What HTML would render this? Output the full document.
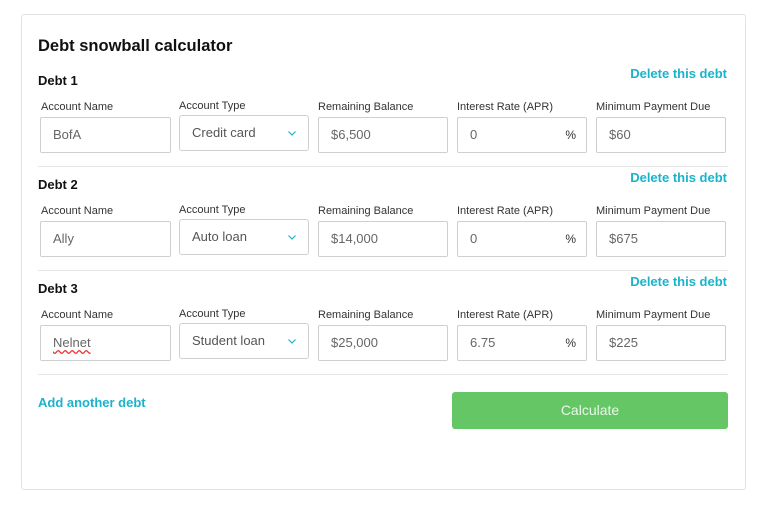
<!DOCTYPE html>
<html><head><meta charset="utf-8"><style>
*{box-sizing:border-box;margin:0;padding:0}
body{width:768px;height:509px;background:#fff;font-family:"Liberation Sans",sans-serif;position:relative;overflow:hidden}
.card{position:absolute;left:21px;top:14px;width:725px;height:476px;border:1px solid #e2e2e2;border-radius:3px}
.a{position:absolute}
h1{position:absolute;left:38px;top:37px;font-size:16.5px;font-weight:bold;color:#111}
.t{font-size:13px;font-weight:bold;color:#111}
.del{font-size:13px;font-weight:bold;color:#1ab3cc;right:41px}
.lbl{font-size:11px;color:#333}
.in{position:absolute;height:36px;border:1px solid #cfcfcf;border-radius:2px;font-size:13px;color:#666;padding-left:12px;line-height:34px}
.sel{height:36px;border-radius:3px;color:#555}
.pct{position:absolute;right:10px;top:0;color:#333;font-size:12px}
.chev{position:absolute;right:12px;top:13px;width:8px;height:8px}
.hr{position:absolute;left:38px;width:690px;height:1px;background:#e6e6e6}
</style></head><body>
<div class="card"></div>
<h1>Debt snowball calculator</h1>

<div class="a t" style="left:38px;top:73px">Debt 1</div>
<div class="a del" style="top:66px">Delete this debt</div>
<div class="a lbl" style="left:41px;top:101px">Account Name</div>
<div class="a lbl" style="left:179px;top:100px">Account Type</div>
<div class="a lbl" style="left:318px;top:101px">Remaining Balance</div>
<div class="a lbl" style="left:457px;top:101px">Interest Rate (APR)</div>
<div class="a lbl" style="left:596px;top:101px">Minimum Payment Due</div>
<div class="in" style="left:40px;top:117px;width:131px">BofA</div>
<div class="in sel" style="left:179px;top:115px;width:130px">Credit card<svg class="chev" viewBox="0 0 8 8"><path d="M0.5 2.5L4 6L7.5 2.5" fill="none" stroke="#1ab3cc" stroke-width="1.2"/></svg></div>
<div class="in" style="left:318px;top:117px;width:130px">$6,500</div>
<div class="in" style="left:457px;top:117px;width:130px">0<span class="pct">%</span></div>
<div class="in" style="left:596px;top:117px;width:130px">$60</div>
<div class="hr" style="top:166px"></div>

<div class="a t" style="left:38px;top:177px">Debt 2</div>
<div class="a del" style="top:170px">Delete this debt</div>
<div class="a lbl" style="left:41px;top:205px">Account Name</div>
<div class="a lbl" style="left:179px;top:204px">Account Type</div>
<div class="a lbl" style="left:318px;top:205px">Remaining Balance</div>
<div class="a lbl" style="left:457px;top:205px">Interest Rate (APR)</div>
<div class="a lbl" style="left:596px;top:205px">Minimum Payment Due</div>
<div class="in" style="left:40px;top:221px;width:131px">Ally</div>
<div class="in sel" style="left:179px;top:219px;width:130px">Auto loan<svg class="chev" viewBox="0 0 8 8"><path d="M0.5 2.5L4 6L7.5 2.5" fill="none" stroke="#1ab3cc" stroke-width="1.2"/></svg></div>
<div class="in" style="left:318px;top:221px;width:130px">$14,000</div>
<div class="in" style="left:457px;top:221px;width:130px">0<span class="pct">%</span></div>
<div class="in" style="left:596px;top:221px;width:130px">$675</div>
<div class="hr" style="top:270px"></div>

<div class="a t" style="left:38px;top:281px">Debt 3</div>
<div class="a del" style="top:274px">Delete this debt</div>
<div class="a lbl" style="left:41px;top:309px">Account Name</div>
<div class="a lbl" style="left:179px;top:308px">Account Type</div>
<div class="a lbl" style="left:318px;top:309px">Remaining Balance</div>
<div class="a lbl" style="left:457px;top:309px">Interest Rate (APR)</div>
<div class="a lbl" style="left:596px;top:309px">Minimum Payment Due</div>
<div class="in" style="left:40px;top:325px;width:131px"><span style="text-decoration:underline wavy #e33;text-underline-offset:2px">Nelnet</span></div>
<div class="in sel" style="left:179px;top:323px;width:130px">Student loan<svg class="chev" viewBox="0 0 8 8"><path d="M0.5 2.5L4 6L7.5 2.5" fill="none" stroke="#1ab3cc" stroke-width="1.2"/></svg></div>
<div class="in" style="left:318px;top:325px;width:130px">$25,000</div>
<div class="in" style="left:457px;top:325px;width:130px">6.75<span class="pct">%</span></div>
<div class="in" style="left:596px;top:325px;width:130px">$225</div>
<div class="hr" style="top:374px"></div>

<div class="a" style="left:38px;top:395px;font-size:13px;font-weight:bold;color:#1ab3cc">Add another debt</div>
<div class="a" style="left:452px;top:392px;width:276px;height:37px;background:#64c664;border-radius:3px;color:#eaf8ea;font-size:14px;text-align:center;line-height:37px">Calculate</div>
</body></html>
